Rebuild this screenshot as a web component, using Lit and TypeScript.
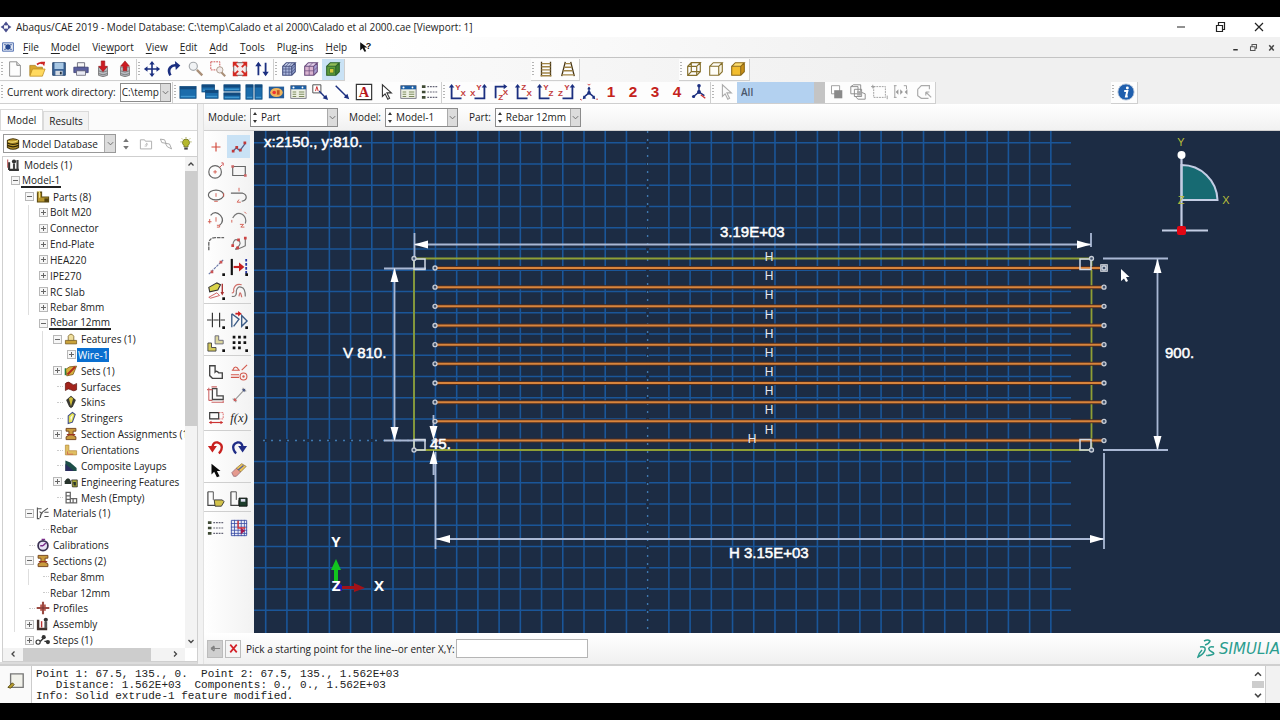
import { LitElement, html, svg, css, nothing, type SVGTemplateResult } from "lit";
import { customElement, property } from "lit/decorators.js";
import { classMap } from "lit/directives/class-map.js";

/* ---------- icon library, every glyph on a 20 x 20 board ---------- */

const NAVY = "#1b2f80";
const axisPair = (path: string, a: string, ax: number, ay: number, b: string, bx: number, by: number, heads: SVGTemplateResult) => svg`
  <path d=${path} fill="none" stroke=${NAVY} stroke-width="2"/>${heads}
  <text x=${ax} y=${ay} class="ax">${a}</text><text x=${bx} y=${by} class="ax">${b}</text>`;
const headUp = (x: number) => svg`<path d="M${x - 3} 5 L${x} 1 L${x + 3} 5Z" fill=${NAVY}/>`;
const numeral = (n: string) => svg`<text x="10" y="16" class="num">${n}</text>`;
const dot = svg`<rect x="17" y="17" width="3" height="3" fill="#111"/>`;
const win = (x: number, y: number, w: number, h: number) => svg`
  <rect x=${x} y=${y} width=${w} height=${h} fill="#1b6cab" stroke="#0e4a7c" stroke-width=".8"/>
  <rect x=${x} y=${y} width=${w} height="3" fill="#124a7e"/>
  <path d="M${x + 1} ${y + h - 2}h${w - 2}" stroke="#3f97cf" stroke-width="1.5"/>`;
const table = svg`
  <rect x="2" y="3" width="17" height="14" fill="#eef0e4" stroke="#556" stroke-width=".8"/>
  <rect x="2" y="3" width="17" height="4" fill="#1d5fa4"/><circle cx="5" cy="5" r="1.2" fill="#fff"/><circle cx="15" cy="5" r="1" fill="#fff"/>
  <path d="M4 10h4M11 10h6M4 12.500h4M11 12.500h6M4 15h4M11 15h6" stroke="#7c8a5c" stroke-width="1.200"/>`;
const cube = (front: string, top: string, side: string, line: string) => svg`
  <path d="M3 7h10v10H3Z" fill=${front}/><path d="M3 7l4-4h10l-4 4Z" fill=${top}/><path d="M13 7l4-4v10l-4 4Z" fill=${side}/>
  <path d="M3 7h10v10H3ZM3 7l4-4h10l-4 4M17 3v10l-4 4" fill="none" stroke=${line} stroke-width="1.200"/>`;
const listing = svg`
  <path d="M7 4h12M7 10h12M7 16h12" stroke="#667" stroke-width="1.200" stroke-dasharray="2 1"/>
  <path d="M1 2.500h4v3H1zM1 8.500h4v3H1zM1 14.500h4v3H1z" fill="#3f4a34"/>`;
const disk = svg`<path d="M1 2v15h9v-5h8" fill="none" stroke="#444" stroke-width="1.300"/><path d="M1 2h6v9" fill="none" stroke="#444"/>`;

const icons: Record<string, SVGTemplateResult> = {
  file: svg`<path d="M4 2h8l4 4v12H4Z" fill="#fdfdfd" stroke="#888"/><path d="M12 2v4h4" fill="#ddd" stroke="#888"/>`,
  open: svg`<path d="M2 6h6l2 2h6v9H2Z" fill="#d9a62c" stroke="#a47a1a" stroke-width=".8"/><path d="M5 10h14l-3 8H2Z" fill="#ffd95e" stroke="#b98a20" stroke-width=".8"/><path d="M10 5q4-3 6-1" stroke="#c22" stroke-width="2" fill="none"/><path d="M14 2l5 0-1 5z" fill="#c22"/>`,
  save: svg`<path d="M3 3h14v14H3Z" fill="#3c6497" stroke="#1e3d68"/><path d="M5 3h10v7H5Z" fill="#a9c8e4"/><path d="M6 12h8v5H6Z" fill="#d5dbe2"/><path d="M11 13h2v3h-2z" fill="#234"/>`,
  print: svg`<path d="M6 3h8v5H6Z" fill="#f5f5f5" stroke="#667"/><path d="M2 8h16v6H2Z" fill="#5a5f9e" stroke="#33386e" stroke-width=".8"/><path d="M5 12h10v5H5Z" fill="#e9eaf4" stroke="#556" stroke-width=".8"/>`,
  dbIn: svg`<path d="M5 8v9q5 3 10 0V8Z" fill="#b9bcc2" stroke="#666" stroke-width=".8"/><path d="M5 12q5 3 10 0M5 15q5 3 10 0" stroke="#777" fill="none"/><path d="M8 1h4v6h3l-5 6-5-6h3Z" fill="#cc1b22" stroke="#8f1015" stroke-width=".6"/>`,
  dbOut: svg`<path d="M5 8v9q5 3 10 0V8Z" fill="#b9bcc2" stroke="#666" stroke-width=".8"/><path d="M5 12q5 3 10 0M5 15q5 3 10 0" stroke="#777" fill="none"/><path d="M8 12h4V7h3l-5-6-5 6h3Z" fill="#cc1b22" stroke="#8f1015" stroke-width=".6"/>`,
  pan: svg`<path d="M10 3v14M3 10h14" stroke=${NAVY} stroke-width="1.800"/><path d="M10 1l3 4H7ZM10 19l3-4H7ZM1 10l4-3v6ZM19 10l-4-3v6Z" fill=${NAVY}/>`,
  rotate: svg`<path d="M6 17C2 10 7 5 13 6" fill="none" stroke=${NAVY} stroke-width="3"/><path d="M11 1l6 5-5 5Z" fill=${NAVY}/>`,
  zoom: svg`<circle cx="7" cy="7" r="4.500" fill="#f1f3f5" stroke="#a5a9ad" stroke-width="1.300"/><path d="M11 11l6 6" stroke="#a98f78" stroke-width="2.600"/>`,
  zoomBox: svg`<path d="M2 2h10v9H2Z" fill="none" stroke="#c44" stroke-dasharray="2 1"/><circle cx="12" cy="11" r="3.500" fill="#f2ecec" stroke="#a98"/><path d="M14 14l4 4" stroke="#a98f78" stroke-width="2.400"/>`,
  fit: svg`<path d="M3 3h14v14H3Z" fill="#f6eaea" stroke="#555"/><path d="M2 2h6L2 8ZM18 2h-6l6 6ZM2 18h6l-6-6ZM18 18h-6l6-6Z" fill="#d42a22"/><path d="M4 4l4 4M16 4l-4 4M4 16l4-4M16 16l-4-4" stroke="#d42a22" stroke-width="2"/>`,
  cycle: svg`<path d="M6 4v13M14 3v13" stroke=${NAVY} stroke-width="2"/><path d="M2.500 7L6 2l3.500 5ZM10.500 13l3.500 5 3.500-5Z" fill=${NAVY}/>`,
  meshA: svg`${cube("#aab6dc", "#c9d1ec", "#8f9dcb", "#46507f")}<path d="M3 10h10l4-4M3 13.500h10l4-4M6.500 7v10M10 7v10M6.500 7l4-4M10 7l4-4" stroke="#46507f" fill="none" stroke-width=".8"/>`,
  meshB: svg`${cube("#d9b3cf", "#e4d0ea", "#a9a0d4", "#6a4c7d")}<path d="M3 12h10l4-4M8 7v10M8 7l4-4" stroke="#6a4c7d" fill="none" stroke-width=".8"/>`,
  meshC: svg`${cube("#5f9e3a", "#8fbb57", "#3e7f2f", "#2d6329")}<path d="M6 9.500h5v5H6Z" fill="#d8c93a" stroke="#37752c"/>`,
  ladder: svg`<path d="M5 2v16M15 2v16" stroke="#4b3a1a" stroke-width="1.500"/><path d="M5 4h10M5 7.500h10M5 11h10M5 14.500h10M4 17.500h12" stroke="#a08445" stroke-width="1.600"/>`,
  persp: svg`<path d="M7 2L3 18M13 2l4 16" stroke="#4b3a1a" stroke-width="1.500"/><path d="M7 4h6M6 8h8M5 12h10M3 16.500h14" stroke="#a08445" stroke-width="1.600"/>`,
  wire: svg`<path d="M3 7h10v10H3ZM3 7l4-4h10l-4 4M17 3v10l-4 4M7 3v10h10M7 13l-4 4" fill="none" stroke="#86702c" stroke-width="1.300"/>`,
  hidden: cube("#fffef8", "#fffef8", "#f6f1de", "#86702c"),
  shaded: cube("#f2bd2f", "#ffdf72", "#c98f17", "#8d6a18"),
  win1: win(1, 4, 18, 13),
  winCascade: svg`${win(1, 2, 14, 8)}${win(5, 8, 14, 9)}`,
  winH: svg`${win(1, 2, 18, 7)}${win(1, 11, 18, 7)}`,
  winV: svg`${win(1, 2, 8, 16)}${win(11, 2, 8, 16)}`,
  palette: svg`<path d="M2 4h17v13H2Z" fill="#245c9a"/><ellipse cx="10.500" cy="10.500" rx="7" ry="5" fill="#f0b45c"/><circle cx="8" cy="10.500" r="2" fill="#e33"/><path d="M11 8h3v5h-3z" fill="#c8551f"/>`,
  table,
  probe: svg`<path d="M2 2h9v9H2Z" fill="#fff" stroke="#444"/><path d="M5 9l1.500-5L8 9" stroke="#c22" fill="none"/><path d="M9 9l7 7" stroke=${NAVY} stroke-width="1.500"/><path d="M19 19l-6-2 4-4Z" fill=${NAVY}/>`,
  arrowLine: svg`<path d="M3 3l12 12" stroke=${NAVY} stroke-width="1.600"/><path d="M18 18l-6-2 4-4Z" fill=${NAVY}/>`,
  textA: svg`<path d="M1.500 1.500h17v17h-17Z" fill="#fff" stroke="#333" stroke-width="1.300"/><text x="10" y="15" class="glyphA">A</text>`,
  pick: svg`<path d="M6 2v13l3-3 3 6 2-1-3-6h5Z" fill="#fff" stroke="#333" stroke-width="1.200"/>`,
  pickDim: svg`<path d="M6 2v13l3-3 3 6 2-1-3-6h5Z" fill="#fafafa" stroke="#aaa" stroke-width="1.200"/>`,
  listing,
  xy: axisPair("M4 4v13h11", "Y", 8, 8, "X", 14, 14, headUp(4)),
  yx: axisPair("M16 4v13H5", "Y", 7, 8, "X", 0, 14, headUp(16)),
  xz: axisPair("M4 17V4h11", "X", 12, 13, "Z", 7, 19, svg`<path d="M13 1l4 3-4 3Z" fill=${NAVY}/>`),
  zx: axisPair("M4 4v13h11", "Z", 8, 8, "X", 14, 14, headUp(4)),
  yz: axisPair("M4 4v13h11", "Y", 8, 8, "Z", 14, 14, headUp(4)),
  zy: axisPair("M16 4v13H5", "Y", 7, 8, "Z", 0, 14, headUp(16)),
  iso: svg`<path d="M10 5v6l-6 5M10 11l6 5" stroke=${NAVY} stroke-width="1.600" fill="none"/><path d="M8 7l2-3 2 3ZM3 18l1-4 3 3ZM17 18l-4-1 3-3Z" fill=${NAVY}/><circle cx="10" cy="11" r="2" fill=${NAVY}/><path d="M8.500 1l1.500 1.500L11.500 1M0 18l2 1M18 18h2" stroke="#c33" fill="none"/>`,
  csys: svg`<path d="M10 3v7l-6 5M10 10l6 4" stroke=${NAVY} stroke-width="1.600" fill="none"/><circle cx="10" cy="3" r="2" fill=${NAVY}/><circle cx="10" cy="10" r="2.200" fill=${NAVY}/><circle cx="4" cy="15" r="1.800" fill=${NAVY}/><path d="M12 13l5 4" stroke="#c33" stroke-width="1.500"/>`,
  n1: numeral("1"), n2: numeral("2"), n3: numeral("3"), n4: numeral("4"),
  selA: svg`<path d="M5 3h9v9H5Z" fill="#fff" stroke="#999"/><path d="M8 8h9v9H8Z" fill="#8a8a8a"/>`,
  selB: svg`<path d="M2 4h8v8H2ZM6 7h8v8H6Z" fill="none" stroke="#888"/><path d="M2 4l3-2h8v8l5 2v6H10l-3-3" fill="none" stroke="#888"/><path d="M9 9h5v5H9z" fill="#aaa"/>`,
  selC: svg`<path d="M3 4h13v12H3Z" fill="none" stroke="#999" stroke-dasharray="2 1"/><path d="M2 2v4M0 4h4M18 14v4" stroke="#999"/>`,
  selD: svg`<path d="M2 3v13M1 3h3M1 16h3M12 3h3v4M12 16h3" stroke="#999" fill="none"/><path d="M3 10l3-3v6ZM8 7l3 3-3 3ZM13 10l3-3v6Z" fill="#999"/>`,
  selE: svg`<path d="M3 7l4-4h9v4M3 7v7l4 3h8M12 10l6 6M12 10h4M12 10v4" stroke="#aaa" fill="none" stroke-width="1.300"/>`,
  info: svg`<circle cx="10" cy="10" r="9" fill="#1f5fae" stroke="#b9c6d8"/><circle cx="11.500" cy="5.500" r="1.600" fill="#fff"/><path d="M8 9h3.500l-1.500 6h2" stroke="#fff" stroke-width="2.200" fill="none"/>`,
  /* toolbox */
  point: svg`<path d="M10 5v10M5 10h10" stroke="#d24a3c" stroke-width="1.300"/>`,
  polyline: svg`<path d="M3 15l4-4 4 3 6-8" stroke="#55608c" stroke-width="1.400" fill="none"/><path d="M2 13h3v3H2zM6 9h3v3H6zM10 12h3v3h-3zM15 4h3v3h-3z" fill="#c03a3a"/>`,
  circle: svg`<circle cx="9" cy="11" r="7" fill="none" stroke="#666" stroke-width="1.300"/><path d="M9 9v4M7 11h4" stroke="#d2584c"/><path d="M14 6l3-3M16 1h2v3" stroke="#c44" fill="none"/>`,
  rect: svg`<path d="M3 5h14v10H3Z" fill="none" stroke="#666" stroke-width="1.300"/><path d="M1.500 3.500h3v3h-3zM15.500 13.500h3v3h-3z" fill="#c66"/>`,
  ellipse: svg`<ellipse cx="10" cy="10" rx="8.500" ry="5.500" fill="none" stroke="#666" stroke-width="1.300"/><path d="M10 8v4M18.500 8v4" stroke="#d2584c"/><path d="M8 17h4" stroke="#d2584c"/>`,
  tangent: svg`<path d="M1 8h13q4 1 4 4.500T13 17" fill="none" stroke="#666" stroke-width="1.300"/><path d="M10 2v4M10 15l-2 3h4" stroke="#d2584c" fill="none"/>`,
  arcC: svg`<path d="M4 6q5-6 11 0 5 6-1 11" fill="none" stroke="#666" stroke-width="1.300"/><path d="M3 10v5M1 13h4M10 8v5M11 17h3v2h-3" stroke="#d2584c" fill="none"/>`,
  arc3: svg`<path d="M3 9q4-8 11-4 5 4 3 10" fill="none" stroke="#777" stroke-width="1.300"/><path d="M2 11v3M16 2l2 2M11 16h4l-3 3h4" stroke="#d2584c" fill="none"/>`,
  fillet: svg`<path d="M2 18v-8q1-6 7-6h10" fill="none" stroke="#666" stroke-width="1.500" stroke-dasharray="4 1"/>`,
  spline: svg`<path d="M3 13q1-9 6-6t-1 8 9-2V5" fill="none" stroke="#777" stroke-width="1.300"/><path d="M1.500 11.500h3v3h-3zM8 5h3v3H8zM7 14h3v3H7zM15.500 3h3v3h-3z" fill="#c44"/>`,
  construct: svg`<path d="M2 18L18 2" stroke="#6a79a8" stroke-width="1.300" stroke-dasharray="3 1"/><path d="M4 14h3v3H4zM14 3h3v3h-3z" fill="#c55"/>${dot}`,
  offset: svg`<path d="M2 1v18" stroke="#111" stroke-width="2.400"/><path d="M4 10h7" stroke="#c51f1f" stroke-width="2.400"/><path d="M10 5l6 5-6 5Z" fill="#c51f1f"/><path d="M18 1v17" stroke="#2433a0" stroke-width="2" stroke-dasharray="3 1.500"/>${dot}`,
  project: svg`<path d="M2 6l9-5 4 2-3 6-9 2Z" fill="#d9d34a" stroke="#333" stroke-width="1.200"/><path d="M2 17l9-5 3 3-10 3Z" fill="none" stroke="#c55"/><path d="M17 2v11" stroke="#a33" stroke-width="1.500"/><path d="M15 11h4l-2 4z" fill="#a33"/>${dot}`,
  offsetCurve: svg`<path d="M2 16q6 1 5-6 1-6 6-4 4 1 4 10" fill="none" stroke="#777" stroke-width="1.300"/><path d="M2 12q3 0 2-4Q6 1 13 3M10 16q1-6 2-3t1 4" fill="none" stroke="#d0706a" stroke-width="1.300"/>`,
  trim: svg`<path d="M0 10h5M7 10h6M15 10h5M6 2v16M14 2v16" stroke="#333" stroke-width="1.300"/>${dot}`,
  mirror: svg`<path d="M2 3v15M2 3l8 6-6 8M13 5l6 6-6 6Z" stroke="#3a5b86" fill="none" stroke-width="1.500"/><path d="M6 3h5" stroke="#c22" stroke-width="2"/><path d="M9 0l4 3-4 3z" fill="#c22"/>${dot}`,
  translate: svg`<path d="M1 10h4v5h5v4H1Z" fill="#d4c95a" stroke="#444"/><path d="M9 2h4v5h5v4H9Z" fill="#ddd7a0" stroke="#667"/>${dot}`,
  pattern: svg`<path d="M3 2h3v3H3zM9 2h3v3H9zM15 2h3v3h-3zM3 8h3v3H3zM9 8h3v3H9zM15 8h3v3h-3zM3 14h3v3H3zM9 14h3v3H9z" fill="#111"/>${dot}`,
  partL: svg`<path d="M3 3h6v7q2-2 4 1h4v6H6l-3-3Z" fill="none" stroke="#444" stroke-width="1.500"/>`,
  constraints: svg`<path d="M2 8h9M3 8q3-7 7 0M13 8l6-6M1 13h9M1 16h9" stroke="#d2584c" fill="none" stroke-width="1.200"/><circle cx="15" cy="15" r="3.800" fill="none" stroke="#d2584c" stroke-width="1.200"/><circle cx="15" cy="15" r="1.300" fill="#d2584c"/>`,
  autoDim: svg`<path d="M6 3h5v8h7v4H6Z" fill="none" stroke="#444" stroke-width="1.400"/><path d="M2 2v14M0 4h6M5 18h13M2 16h4M18 16v3M5 1h6" stroke="#c66" fill="none" stroke-width="1.200"/>`,
  dim: svg`<path d="M5 16L16 4M3 14l4 4M14 2l4 4" stroke="#999" stroke-width="1.200"/><path d="M4 17l4-1-3-3z" fill="#c55"/><path d="M17 3l-4 1 3 3z" fill="#44507c"/>`,
  editDim: svg`<path d="M3 4h10v7H3Z" fill="none" stroke="#333" stroke-width="1.300"/><path d="M13 4h5v7h-5" fill="none" stroke="#d66" stroke-dasharray="2 1"/><path d="M3 15h14" stroke="#c33" stroke-width="1.300"/><path d="M2 15l3-2v4ZM18 15l-3-2v4Z" fill="#c33"/>`,
  fx: svg`<text x="10" y="14" class="fx">f(x)</text>`,
  undo: svg`<path d="M6 10q1-6 6-5 6 2 4 8-1 3-3 4" fill="none" stroke="#c8201e" stroke-width="2.600"/><path d="M1 9h10l-5 7Z" fill="#c8201e"/>`,
  redo: svg`<path d="M14 10q-1-6-6-5-6 2-4 8 1 3 3 4" fill="none" stroke="#1f2c86" stroke-width="2.600"/><path d="M19 9H9l5 7Z" fill="#1f2c86"/>`,
  cursor: svg`<path d="M5 3v12l3-3 3 6 3-1-3-6h4Z" fill="#0a0a0a"/>`,
  eraser: svg`<path d="M2 13l5-5 5 4-5 5H4Z" fill="#e59a8e" stroke="#8a5d6c" stroke-width=".8"/><path d="M7 8l6-5 5 3-6 6Z" fill="#edc45a" stroke="#8c7136" stroke-width=".8"/><path d="M9 10l6-5" stroke="#5560a0" stroke-width="1.500"/>`,
  partOpen: svg`${disk}<path d="M8 11h9l2 2-3 5H9Z" fill="#d2c24a" stroke="#333"/>`,
  partSave: svg`${disk}<path d="M10 9h9v9h-9Z" fill="#1d3d2c" stroke="#111"/><path d="M12 10h5v3h-5z" fill="#dde"/>`,
  grid: svg`<path d="M1.500 1.500h17v17h-17Z" fill="#e9ecf8" stroke="#3c4ea5"/><path d="M5 1v18M9 1v18M12.500 1v18M16 1v18M1 5h18M1 9h18M1 12.500h18M1 16h18" stroke="#3c4ea5" stroke-width=".9"/><path d="M9 2v8h8" stroke="#d33" fill="none" stroke-width="1.500"/><path d="M12 10l5 3-5 4z" fill="#a2174e"/>`,
  /* tree */
  models: svg`<path d="M3 6v11M3 17h14" stroke="#333" stroke-width="3"/><circle cx="10" cy="5" r="3" fill="#333"/><path d="M10 8v8M15 3v13" stroke="#444" stroke-width="3"/><path d="M1 2v12" stroke="#b55" stroke-width="1.500"/>`,
  parts: svg`<path d="M2 3h6v7h10v7H2Z" fill="#b7962f" stroke="#5c4a12" stroke-width="1.500"/><path d="M2 3l3-1v9" stroke="#efe08a" fill="none" stroke-width="1.500"/><path d="M12 12h6v5h-6z" fill="#55430f"/>`,
  features: svg`<path d="M2 12h16v5H2Z" fill="#c9a23c" stroke="#6b5217"/><path d="M6 12V6q4-6 8 0v6Z" fill="#efdf9f" stroke="#6b5217"/>`,
  sets: svg`<path d="M2 8l6-4 10-1-5 12-9 2Z" fill="#d5b13c" stroke="#6d4a12"/><path d="M5 15L16 4" stroke="#b3301e" stroke-width="3"/><path d="M2 6v10" stroke="#2c7d3a" stroke-width="2"/>`,
  surfaces: svg`<path d="M2 5q4-4 8 0t8 0v9q-4 3-8 0t-8 1Z" fill="#a3241c" stroke="#5c120e"/>`,
  skins: svg`<path d="M10 1l7 6-4 9-3 3-3-3-4-9Z" fill="#3b3b34"/><path d="M7 5l3-2 3 2-3 11Z" fill="#d1bf3a"/>`,
  stringers: svg`<path d="M6 7l6-5 4 3-4 11-6 2Z" fill="#e3e04c" stroke="#3e4a8a" stroke-width="1.500"/><path d="M9 9l4-4-3 10z" fill="#f8f8f0"/>`,
  section: svg`<path d="M3 2h14v4h-4v6l4 2v4H3v-4l4-2V6H3Z" fill="#c99b3e" stroke="#6f3f18" stroke-width="1.300"/><path d="M4 11h12" stroke="#9a3520" stroke-width="2"/>`,
  orient: svg`<path d="M2 3h5v8h11v6H2Z" fill="#e0bf62" stroke="#b58b3c"/><path d="M5 12v4h8" stroke="#c55" fill="none"/>`,
  layup: svg`<path d="M2 2l7 3 9 8v4H2Z" fill="#1d4f48"/><path d="M2 7l12 10H2Z" fill="#2b2d60"/>`,
  eng: svg`<path d="M1 9q5-9 9 0v4H1Z" fill="#26332b"/><path d="M11 7h8v10h-7Z" fill="#a8a63a" stroke="#222"/><path d="M13 10h4v5h-3z" fill="#26332b"/>`,
  mesh: svg`<path d="M3 2h6v15H3ZM9 11h9v6H9ZM3 7h6M3 12h6M13 11v6" fill="none" stroke="#666" stroke-width="1.800"/>`,
  materials: svg`<path d="M2 2v16h3M2 4h6M6 17q0-6 4-9l7-5M12 9h6M12 15h6M5 8l4 3" stroke="#555" stroke-width="1.600" fill="none"/>`,
  calib: svg`<circle cx="10" cy="11" r="7" fill="#e8e4f4" stroke="#3a3152" stroke-width="2.500"/><path d="M10 11l4-4M10 11H6M8 2h5" stroke="#7b2e8b" stroke-width="2"/>`,
  profiles: svg`<path d="M10 1v18M1 10h18" stroke="#9a4a42" stroke-width="3"/><path d="M6 5h8v9H6Z" fill="#b85a50"/><path d="M10 5v9M6 10h8" stroke="#5f2a26"/>`,
  assembly: svg`<path d="M3 4v13h13" stroke="#40302c" stroke-width="3.500" fill="none"/><path d="M8 6v9" stroke="#b33" stroke-width="2"/><circle cx="14" cy="4" r="3" fill="#333"/><path d="M14 7v9" stroke="#555" stroke-width="4"/>`,
  steps: svg`<circle cx="3" cy="13" r="3" fill="none" stroke="#333" stroke-width="1.600"/><path d="M6 12l5-5M12 12h5" stroke="#333" stroke-width="2"/><circle cx="11" cy="6" r="3" fill="#333"/><circle cx="17" cy="13" r="3" fill="#333"/>`,
  db: svg`<path d="M2 5q8-5 16 0v10q-8 5-16 0Z" fill="#b9962b" stroke="#4c3a0c" stroke-width="1.500"/><path d="M2 8.500q8 4 16 0M2 12q8 4 16 0" stroke="#2e2408" fill="none" stroke-width="1.800"/><path d="M3 6q7 3 14-1" stroke="#f3dd76" fill="none" stroke-width="1.500"/>`,
  sort: svg`<path d="M6 7L10 2l4 5ZM6 13l4 5 4-5Z" fill="#777"/>`,
  folderUp: svg`<path d="M2 4h6l1 2h9v11H2Z" fill="none" stroke="#aaa" stroke-width="1.300"/><path d="M8 13h3V9M9 11l2-2 2 2" stroke="#aaa" fill="none"/>`,
  links: svg`<path d="M2 3l6 1 2 5-6-1ZM9 9l6 1 3 7-6-3Z" fill="none" stroke="#aaa" stroke-width="1.400"/>`,
  bulb: svg`<path d="M10 3a5 5 0 0 1 3 9v2H7v-2a5 5 0 0 1 3-9Z" fill="#b5b82c" stroke="#5f6216"/><path d="M7.500 15h5v3h-5z" fill="#444"/><path d="M10 0v2M2 7h2M16 7h2M4 2l1.500 1.500M16 2l-1.500 1.500" stroke="#8a8c22"/>`,
  app: svg`<path d="M10 1l4 5-4 3-4-3ZM10 19l4-5-4-3-4 3Z" fill="#4a4f8e"/><path d="M1 10l6-4v8ZM19 10l-6-4v8Z" fill="#4a4f8e"/><circle cx="10" cy="10" r="3" fill="#fff"/>`,
  doc: svg`<path d="M1 3h18v14H1Z" fill="#e7ecf6" stroke="#4464ad" stroke-width="1.500"/><circle cx="10" cy="10" r="4.500" fill="#27488f"/><path d="M4 6h2M14 6h2M4 14h2M14 14h2" stroke="#27488f" stroke-width="2"/>`,
  help: svg`<path d="M2 2v14l4-4 3 6 3-1-3-6h5Z" fill="#111"/><text x="16" y="14" class="q">?</text>`,
  min: svg`<path d="M6 10h8" stroke="#222" stroke-width="1"/>`,
  max: svg`<path d="M6.500 8.500h6v6h-6ZM8.500 8V5.500h6v7H13" fill="none" stroke="#222" stroke-width="1.200"/>`,
  close: svg`<path d="M6 6l8 8M14 6l-8 8" stroke="#222" stroke-width="1.200"/>`,
  mMin: svg`<path d="M7 13h6" stroke="#333" stroke-width="2"/>`,
  mMax: svg`<path d="M6 9h6v5H6ZM8 9V6h6v5h-2" fill="none" stroke="#555" stroke-width="1.400"/>`,
  mClose: svg`<path d="M7 7l6 7M13 7l-6 7" stroke="#444" stroke-width="2"/>`,
  back: svg`<path d="M3 10h14M3 10l5-4M3 10l5 4M8 7v6" stroke="#7f7f7f" stroke-width="1.800" fill="none"/>`,
  cancel: svg`<path d="M5 4l10 12M15 4L5 16" stroke="#d3222a" stroke-width="2.600"/>`,
  message: svg`<path d="M4 2h14v15H4Z" fill="#f1f1ea" stroke="#777" stroke-width="1.500"/><path d="M1 17l5-5 2 2-4 4Z" fill="#b99e2d" stroke="#554710"/>`,
  up: svg`<path d="M5 13l5-5 5 5" fill="none" stroke="#444" stroke-width="2.600"/>`,
  down: svg`<path d="M5 8l5 5 5-5" fill="none" stroke="#444" stroke-width="2.600"/>`,
  left: svg`<path d="M13 5l-5 5 5 5" fill="none" stroke="#444" stroke-width="2.600"/>`,
  right: svg`<path d="M8 5l5 5-5 5" fill="none" stroke="#444" stroke-width="2.600"/>`,
  chev: svg`<path d="M4 7l6 6 6-6" fill="none" stroke="#666" stroke-width="2"/>`,
};

@customElement("cae-icon")
export class CaeIcon extends LitElement {
  @property() name = "";
  static styles = css`
    :host { display: block; width: 20px; height: 20px; flex: none; }
    svg { display: block; width: 100%; height: 100%; overflow: visible; }
    .ax { font: bold 9px "Liberation Sans", sans-serif; fill: #c23a3a; }
    .num { font: bold 17px "Liberation Sans", sans-serif; fill: #c4231c; text-anchor: middle; }
    .glyphA { font: bold 16px "Liberation Serif", serif; fill: #b8161c; text-anchor: middle; }
    .fx { font: italic 14px "Liberation Serif", serif; fill: #222; text-anchor: middle; }
    .q { font: bold 15px "Liberation Sans", sans-serif; fill: #111; text-anchor: middle; }
  `;
  render() {
    return html`<svg viewBox="0 0 20 20" aria-hidden="true">${icons[this.name]}</svg>`;
  }
}

/* ---------- drop-down with optional stepper marks ---------- */

@customElement("cae-combo")
export class CaeCombo extends LitElement {
  @property() label = "";
  @property() value = "";
  @property({ type: Boolean }) stepper = false;
  static styles = css`
    :host { display: flex; align-items: center; gap: 4px; font: 10px/16px "Open Sans", sans-serif; color: #222; }
    .box { display: grid; grid-template-columns: auto 1fr 10px; align-items: center; flex: 1; background: #fff; border: 1px solid #8c8c8c; height: 17px; min-width: 0; }
    select { grid-column: 1 / -1; grid-row: 1; appearance: none; border: 0; background: none; font: inherit; color: inherit; padding: 0 8px 0 1px; margin: 0; width: 100%; height: 17px; outline: none; }
    .steps select { padding-left: 10px; }
    .marks, .drop { grid-row: 1; pointer-events: none; }
    .marks { grid-column: 1; width: 9px; height: 15px; }
    .drop { grid-column: 3; display: grid; place-items: center; width: 10px; height: 17px; background: #dcdcdc; border-left: 1px solid #aaa; box-sizing: border-box; }
    .drop cae-icon { width: 9px; height: 9px; }
    label { white-space: nowrap; }
  `;
  render() {
    return html`
      ${this.label ? html`<label for="s">${this.label}</label>` : nothing}
      <div class=${classMap({ box: true, steps: this.stepper })}>
        <select id="s" aria-label=${this.label || this.value}><option>${this.value}</option></select>
        ${this.stepper ? html`<svg class="marks" viewBox="0 0 9 15"><path d="M2 5l2-3 2 3ZM2 10l2 3 2-3Z" fill="#333"/></svg>` : nothing}
        <span class="drop"><cae-icon name="chev"></cae-icon></span>
      </div>`;
  }
}

/* ---------- model tree ---------- */

type Node = [depth: number, text: string, icon?: string, toggle?: "" | "+" | "-", mark?: "current" | "selected"];
const tree: Node[] = [
  [0, "Models (1)", "models"],
  [1, "Model-1", "", "-", "current"],
  [2, "Parts (8)", "parts", "-"],
  [3, "Bolt M20", "", "+"], [3, "Connector", "", "+"], [3, "End-Plate", "", "+"], [3, "HEA220", "", "+"],
  [3, "IPE270", "", "+"], [3, "RC Slab", "", "+"], [3, "Rebar 8mm", "", "+"],
  [3, "Rebar 12mm", "", "-", "current"],
  [4, "Features (1)", "features", "-"],
  [5, "Wire-1", "", "+", "selected"],
  [4, "Sets (1)", "sets", "+"], [4, "Surfaces", "surfaces"], [4, "Skins", "skins"], [4, "Stringers", "stringers"],
  [4, "Section Assignments (1)", "section", "+"], [4, "Orientations", "orient"], [4, "Composite Layups", "layup"],
  [4, "Engineering Features", "eng", "+"], [4, "Mesh (Empty)", "mesh"],
  [2, "Materials (1)", "materials", "-"], [3, "Rebar"],
  [2, "Calibrations", "calib"],
  [2, "Sections (2)", "section", "-"], [3, "Rebar 8mm"], [3, "Rebar 12mm"],
  [2, "Profiles", "profiles"], [2, "Assembly", "assembly", "+"], [2, "Steps (1)", "steps", "+"],
];

@customElement("cae-tree")
export class CaeTree extends LitElement {
  static styles = css`
    :host { display: flex; flex-direction: column; min-height: 0; font: 10px/14px "Open Sans", sans-serif; color: #222; }
    .view { flex: 1; display: flex; min-height: 0; overflow: hidden; }
    ul { flex: 1; min-width: 0; overflow: hidden; margin: 0; padding: 0; list-style: none; display: grid; grid-auto-rows: 1fr; }
    li { display: flex; align-items: center; white-space: nowrap; min-height: 0; }
    .lead { flex: none; align-self: stretch; display: flex; }
    .lead:empty { width: 3px; }
    .pad { width: 6px; }
    .guide { width: 14px; box-sizing: border-box; }
    .guide.on::before { content: ""; display: block; height: 100%; margin-left: 5px; border-left: 1px solid #dedede; }
    .slot { width: 12px; flex: none; display: grid; place-items: center; align-self: stretch; }
    .stub { width: 6px; margin-left: 6px; border-top: 1px dotted #ccc; }
    .toggle { width: 9px; height: 9px; padding: 0; border: 1px solid #b8b8b8; background: #f6f6f6; display: grid; place-items: center; }
    .toggle svg { width: 7px; height: 7px; display: block; }
    cae-icon { width: 14px; height: 14px; margin: 0 2px 0 1px; }
    .text { padding: 0 1px; }
    .current { border-bottom: 2px solid #222; line-height: 12px; }
    .selected { background: #0a6fd0; color: #fff; }
    .bar { flex: none; background: #f3f3f3; display: flex; }
    .bar.v { width: 12px; flex-direction: column; }
    .bar.h { height: 13px; margin-right: 12px; }
    .bar cae-icon { width: 10px; height: 12px; margin: 1px; }
    .bar.h cae-icon { margin: 0 5px; }
    .track { flex: 1; display: flex; flex-direction: inherit; }
    .thumb { background: #cdcdcd; }
    .v .thumb { flex: 0 0 55%; }
    .h .thumb { flex: 0 0 90%; }
  `;
  render() {
    return html`
      <div class="view">
        <ul role="tree">${tree.map(([depth, text, icon, toggle, mark], i) => html`
          <li role="treeitem">
            <span class="lead">${depth ? html`<span class="pad"></span>${Array.from({ length: depth - 1 }, (_, g) =>
              html`<span class=${classMap({ guide: true, on: this.hasGuide(i, g + 2) })}></span>`)}` : nothing}</span>
            ${depth ? html`<span class="slot">${toggle
              ? html`<button class="toggle" aria-label="Toggle ${text}"><svg viewBox="0 0 7 7"><path d=${toggle === "+" ? "M1 3.500h5M3.500 1v5" : "M1 3.500h5"} stroke="#666"/></svg></button>`
              : html`<span class="stub"></span>`}</span>` : nothing}
            ${icon ? html`<cae-icon name=${icon}></cae-icon>` : nothing}
            <span class=${classMap({ text: true, current: mark === "current", selected: mark === "selected" })}>${text}</span>
          </li>`)}
        </ul>
        <div class="bar v"><cae-icon name="up"></cae-icon><div class="track"><div class="thumb"></div></div><cae-icon name="down"></cae-icon></div>
      </div>
      <div class="bar h"><cae-icon name="left"></cae-icon><div class="track"><div class="thumb"></div></div><cae-icon name="right"></cae-icon></div>`;
  }
  /* a guide shows where a later sibling at that level still follows */
  hasGuide(i: number, level: number) {
    for (let k = i + 1; k < tree.length; k++) {
      if (tree[k][0] === level) return true;
      if (tree[k][0] < level) return false;
    }
    return false;
  }
}

/* ---------- sketch viewport ---------- */

const STEP = 21.22;
const cols = Array.from({ length: 38 }, (_, i) => 265.7 + i * STEP);
const rows = Array.from({ length: 23 }, (_, i) => 142.7 + i * 21.25);
const bars = Array.from({ length: 10 }, (_, i) => 268 + i * 19.17);
const head = (x: number, y: number, dir: "l" | "r" | "u" | "d") => {
  const d = { l: "l14-4v8z", r: "l-14-4v8z", u: "l-4 14h8z", d: "l-4-14h8z" }[dir];
  return svg`<path d="M${x} ${y}${d}" class="head"/>`;
};

@customElement("cae-viewport")
export class CaeViewport extends LitElement {
  static styles = css`
    :host { display: block; background: #1c2c44; overflow: hidden; }
    svg { display: block; width: 100%; height: 100%; }
    .grid { stroke: #1a5699; stroke-width: 1.6; }
    .axis { stroke: #3f78ae; stroke-width: 1.4; stroke-dasharray: 2 6; }
    .axis.back { stroke: #1c2c44; stroke-width: 3; stroke-dasharray: none; }
    .bar { stroke: #d8843c; stroke-width: 2; }
    .barEdge { stroke: #4a2c22; stroke-width: 4; }
    .frame { fill: none; stroke: #8f9f35; stroke-width: 1.8; }
    .dim { stroke: #a9b8d4; stroke-width: 1.8; fill: none; }
    .head { fill: #fff; }
    .sq { fill: none; stroke: #d0d8e4; stroke-width: 1.5; }
    .node { fill: #43546e; stroke: #c8ced8; stroke-width: 1.3; }
    text { font-family: "Liberation Sans", sans-serif; fill: #fff; }
    .val { font-size: 15px; stroke: #fff; stroke-width: .5; }
    .h { font-size: 12px; text-anchor: middle; fill: #e4e9f0; }
    .tri { font: bold 15px "Open Sans", sans-serif; text-anchor: middle; }
    .cmp { font-size: 11px; fill: #b9bf3a; text-anchor: middle; }
  `;
  render() {
    return html`<svg viewBox="254 131 1026 501" preserveAspectRatio="xMinYMin meet" role="img" aria-label="Sketch">
      ${cols.map((x) => svg`<path class="grid" d="M${x} 131V640"/>`)}
      ${rows.map((y) => svg`<path class="grid" d="M254 ${y}H1071"/>`)}
      <path class="axis back" d="M647.600 131V640M254 440.500H435"/>
      <path class="axis" d="M647.600 131V640"/><path class="axis" d="M263 440.500H435"/>
      <path class="frame" d="M414 258.500H1091.500V450H414Z"/>
      ${bars.map((y) => svg`<path class="barEdge" d="M436 ${y}H1103"/><path class="bar" d="M435 ${y}H1104"/>`)}
      <path class="dim" d="M414 244.500H1091M414.500 233V258M1091 233V247M394.500 268V440M384 268.500H426M384 440.500H426
        M1157.500 259V450M1103 258.500H1168M1103 450H1168M436 539H1104M435.500 452V549M1104 453V549M433.500 415V435M433.500 455V475"/>
      ${head(414, 244.5, "l")}${head(1091, 244.5, "r")}${head(394.5, 268, "u")}${head(394.5, 441, "d")}
      ${head(1157.5, 259, "u")}${head(1157.5, 450, "d")}${head(436, 539, "l")}${head(1104, 539, "r")}
      ${head(433.5, 440, "d")}${head(433.5, 450, "u")}
      <path class="sq" d="M414 259h11v10.500h-11ZM1080 259h11v10.500h-11ZM414 439.500h11v10.500h-11ZM1080 439.500h11v10.500h-11Z"/>
      ${bars.map((y) => svg`<circle class="node" cx="435" cy=${y} r="2"/><circle class="node" cx="1104" cy=${y} r="2"/>`)}
      ${[[414, 258.5], [1091.5, 258.5], [414, 450], [1091.5, 450]].map(([x, y]) => svg`<circle class="node" cx=${x} cy=${y} r="2"/>`)}
      <path d="M1100.500 264.500h7v7h-7Z" fill="#8d98a8" stroke="#b7bcc4"/><circle class="node" cx="1104" cy="268" r="2"/>
      ${bars.map((y) => svg`<text class="h" x="769" y=${y - 7}>H</text>`)}
      <text class="h" x="752" y="443">H</text>
      <text class="val" x="264" y="147">x:2150., y:810.</text>
      <text class="val" x="720" y="237">3.19E+03</text>
      <text class="val" x="343" y="358">V 810.</text>
      <text class="val" x="1165" y="358">900.</text>
      <text class="val" x="430" y="449">45.</text>
      <text class="val" x="729" y="558">H 3.15E+03</text>
      <path d="M334 582v-12h-3l5-11 5 11h-3v12Z" fill="#12c41e"/>
      <path d="M342 586h12v-3l11 5-11 4v-3H342Z" fill="#a31218"/>
      <path d="M337 582l5 3v6h-5z" fill="#1a1fae"/>
      <text class="tri" x="336" y="547">Y</text><text class="tri" x="336" y="591">Z</text><text class="tri" x="379" y="591">X</text>
      <path d="M1181.500 165A36 36 0 0 1 1217.500 200H1181.500Z" fill="#176a72" stroke="#c3cde4" stroke-width="2"/>
      <path d="M1181.500 155V230M1162 230.500H1208" stroke="#c3cde4" stroke-width="2.200"/>
      <circle cx="1181.500" cy="155" r="4" fill="#fff"/><rect x="1177" y="226" width="9" height="9" rx="2" fill="#e30613"/>
      <text class="cmp" x="1181" y="146">Y</text><text class="cmp" x="1226" y="204">X</text><text class="cmp" x="1181" y="204">Z</text>
      <path d="M1121 269v12l3-2.500 2 3.500 2-1-2-4h3.500Z" fill="#fff"/>
    </svg>`;
  }
}

/* ---------- application window ---------- */

const bar1 = {
  left: [["file", "open", "save", "print", "dbIn", "dbOut"], ["pan", "rotate", "zoom", "zoomBox", "fit", "cycle"], ["meshA", "meshB", "meshC"]],
  mid: ["ladder", "persp"],
  right: ["wire", "hidden", "shaded"],
};
const bar2 = [
  ["win1", "winCascade", "winH", "winV", "palette", "table", "probe", "arrowLine", "textA", "pick", "table", "listing"],
  ["xy", "yx", "xz", "zx", "yz", "zy", "iso", "n1", "n2", "n3", "n4", "csys"],
];
const toolbox = [
  ["point", "polyline", "circle", "rect", "ellipse", "tangent", "arcC", "arc3", "fillet", "spline", "construct", "offset", "project", "offsetCurve"],
  ["trim", "mirror", "translate", "pattern"],
  ["partL", "constraints", "autoDim", "dim", "editDim", "fx"],
  ["undo", "redo", "cursor", "eraser"],
  ["partOpen", "partSave"],
  ["listing", "grid"],
];
const menus: [string, string, string][] = [
  ["", "F", "ile"], ["", "M", "odel"], ["Vie", "w", "port"], ["", "V", "iew"], ["", "E", "dit"],
  ["", "A", "dd"], ["", "T", "ools"], ["Plu", "g", "-ins"], ["", "H", "elp"],
];

@customElement("app-root")
export class AppRoot extends LitElement {
  static styles = css`
    :host { display: flex; flex-direction: column; box-sizing: border-box; height: 100vh; padding: 17px 0; background: #000; color: #222; font: 10px/16px "Open Sans", sans-serif; overflow: hidden; }
    button { font: inherit; color: inherit; background: none; border: 0; padding: 0; margin: 0; display: grid; place-items: center; }
    .title { display: flex; align-items: center; height: 20px; background: #fff; padding-right: 11px; }
    .title h1 { flex: 1; margin: 0 0 0 4px; font: 10px/20px "Open Sans", sans-serif; white-space: nowrap; overflow: hidden; }
    .title > cae-icon { width: 12px; height: 12px; }
    .wins { display: flex; gap: 19px; }
    .menu { display: flex; align-items: center; height: 20px; background: linear-gradient(90deg, #fff 30%, #f1f1f1 70%); border-bottom: 1px solid #c4c4c4; padding: 0 0 0 2px; }
    .menu nav { flex: 1; display: flex; align-items: center; gap: 12px; margin-left: 9px; }
    .menu > cae-icon { width: 12px; height: 12px; }
    .menu nav cae-icon { width: 12px; height: 12px; }
    .menu u { text-underline-offset: 2px; }
    .menu .mdi { width: 18px; }
    .mdi cae-icon { width: 15px; height: 15px; }
    .bar { display: flex; align-items: center; height: 23px; background: linear-gradient(90deg, #fafafa 30%, #f0f0f0 70%); }
    .group { display: flex; align-items: center; height: 22px; background: #fdfdfd; border-right: 1px solid #cfcfcf; border-bottom: 1px solid #cfcfcf; box-sizing: border-box; }
    .group::before { content: ""; width: 2px; height: 15px; margin: 0 1px; background: repeating-linear-gradient(#b5b5b5 0 1px, transparent 1px 3px); }
    .tool { width: 22px; height: 21px; }
    .tool cae-icon, .cell cae-icon { width: 18px; height: 18px; }
    .on { background: #c9e2f5; }
    .gapA { flex: 0 0 186px; }
    .gapB { flex: 0 0 99px; }
    .gapC { flex: 0 0 175px; }
    .cwd { width: 164px; margin: 0 1px 0 3px; }
    .filter { width: 88px; height: 21px; background: #b3d1f0; display: grid; grid-template-columns: 1fr 11px; }
    .filter select { grid-area: 1 / 1 / 2 / 3; appearance: none; border: 0; background: none; font: inherit; font-weight: 600; color: #49566a; padding: 0 0 0 4px; }
    .filter i { grid-area: 1 / 2; background: #c4c4c4; pointer-events: none; }
    .main { flex: 1; display: flex; min-height: 0; background: #f2f2f2; }
    .side { width: 198px; flex: none; display: flex; flex-direction: column; background: #fff; box-sizing: border-box; border-right: 1px solid #d0d0d0; border-bottom: 2px solid #dcdcdc; padding-top: 5px; }
    .tabs { display: flex; align-items: flex-end; height: 21px; background: #fbfbfb; }
    .tab { height: 21px; padding: 0 6px; border: 1px solid #dadada; border-bottom: 0; background: #fff; }
    .tab.off { height: 19px; padding: 0 5px; background: #f3f3f3; }
    .pick { display: flex; align-items: center; height: 25px; padding: 0 0 0 3px; border-top: 1px solid #d8d8d8; }
    .pick .source { flex: 0 0 113px; display: flex; align-items: center; border: 1px solid #999; box-sizing: border-box; height: 19px; }
    .source cae-icon { width: 14px; height: 14px; margin-left: 2px; }
    .source select { appearance: none; border: 0; background: none; font: inherit; color: inherit; padding: 0 0 0 2px; flex: 1; min-width: 0; height: 17px; }
    .source span { width: 10px; height: 17px; background: #dcdcdc; border-left: 1px solid #aaa; display: grid; place-items: center; }
    .source span cae-icon { width: 9px; height: 9px; margin: 0; }
    .pick button { width: 20px; height: 20px; }
    .pick button cae-icon { width: 14px; height: 14px; }
    .side cae-tree { flex: 1; border: 1px solid #cfcfcf; border-right: 0; margin-left: 2px; }
    .work { flex: 1; min-width: 0; display: flex; flex-direction: column; margin-left: 5px; border-left: 1px solid #e2e2e2; background: #f7f7f7; }
    .context { display: flex; align-items: center; gap: 11px; height: 26px; padding-left: 4px; background: linear-gradient(#fff, #f1f1f1); }
    .c1 { width: 130px; } .c2 { width: 109px; } .c3 { width: 112px; }
    .stage { flex: 1; min-height: 0; display: flex; border-top: 1px solid #d0d0d0; box-sizing: border-box; }
    .box { width: 50px; flex: none; background: linear-gradient(90deg, #fff, #f2f2f2); box-sizing: border-box; padding: 0 3px 0 0; }
    .set { display: grid; grid-template-columns: 23px 23px; grid-auto-rows: 23px; padding: 4px 0 1px; border-bottom: 1px solid #cfcfcf; }
    .set:first-child { row-gap: 1px; }
    .set:last-child { border: 0; }
    .cell { width: 23px; height: 23px; }
    .stage cae-viewport { flex: 1; min-width: 0; }
    .prompt { display: flex; align-items: center; height: 31px; background: linear-gradient(#fff, #f0f0f0); padding-left: 3px; }
    .prompt button { width: 16px; height: 18px; border: 1px solid #bcbcbc; background: #f5f5f5; margin-right: 2px; box-sizing: border-box; }
    .prompt button.dim { background: #cfcfcf; }
    .prompt button cae-icon { width: 13px; height: 13px; }
    .prompt label { margin: 0 1px 0 3px; white-space: nowrap; }
    .prompt input { width: 132px; height: 19px; box-sizing: border-box; border: 1px solid #b5b5b5; background: #fff; padding: 0 3px; font: inherit; outline: none; }
    .brand { margin-left: auto; display: flex; align-items: center; color: #2a9d8f; font: italic 15px/20px "DejaVu Sans", sans-serif; }
    .brand svg { width: 19px; height: 20px; margin-right: 3px; }
    .log { display: flex; height: 39px; border-top: 2px solid #cfcfcf; box-sizing: border-box; background: #f2f2f2; }
    .log > button { width: 32px; background: #fafafa; border-right: 1px solid #ccc; box-sizing: border-box; align-content: start; padding-top: 6px; }
    .log > button cae-icon { width: 18px; height: 18px; }
    .log pre { flex: 1; margin: 0; padding: 3px 0 0 4px; background: #fff; color: #222; font: 11px/11px "Liberation Mono", monospace; overflow: hidden; }
    .sb { width: 14px; display: flex; flex-direction: column; align-items: center; justify-content: space-between; background: #fff; border-right: 1px solid #ccc; margin-right: 14px; padding: 2px 0; }
    .sb cae-icon { width: 12px; height: 12px; }
    .sb span { width: 12px; height: 7px; background: #cdcdcd; }
  `;

  private tools(names: string[], active = "") {
    return names.map((n) => html`<button class=${classMap({ tool: true, on: n === active })} aria-label=${n}><cae-icon name=${n}></cae-icon></button>`);
  }

  render() {
    return html`
      <header class="title">
        <cae-icon name="app"></cae-icon>
        <h1>Abaqus/CAE 2019 - Model Database: C:\\temp\\Calado et al 2000\\Calado et al 2000.cae [Viewport: 1]</h1>
        <div class="wins">${["min", "max", "close"].map((n) => html`<button aria-label=${n}><cae-icon name=${n}></cae-icon></button>`)}</div>
      </header>
      <div class="menu">
        <cae-icon name="doc"></cae-icon>
        <nav>${menus.map(([a, k, b]) => html`<button>${html`<span>${a}<u>${k}</u>${b}</span>`}</button>`)}
          <button aria-label="Context help"><cae-icon name="help"></cae-icon></button></nav>
        ${["mMin", "mMax", "mClose"].map((n) => html`<button class="mdi" aria-label=${n}><cae-icon name=${n}></cae-icon></button>`)}
      </div>
      <div class="bar">
        ${bar1.left.map((g) => html`<div class="group">${this.tools(g, "meshC")}</div>`)}
        <span class="gapA"></span>
        <div class="group">${this.tools(bar1.mid)}</div>
        <span class="gapB"></span>
        <div class="group">${this.tools(bar1.right)}</div>
      </div>
      <div class="bar">
        <div class="group"><cae-combo class="cwd" label="Current work directory:" value="C:\\temp"></cae-combo></div>
        ${bar2.map((g) => html`<div class="group">${this.tools(g)}</div>`)}
        <div class="group">${this.tools(["pickDim"])}
          <div class="filter"><select aria-label="Selection filter"><option>All</option></select><i></i></div>
          ${this.tools(["selA", "selB", "selC", "selD", "selE"])}</div>
        <span class="gapC"></span>
        <div class="group">${this.tools(["info"])}</div>
      </div>
      <div class="main">
        <aside class="side">
          <div class="tabs"><button class="tab">Model</button><button class="tab off">Results</button></div>
          <div class="pick">
            <div class="source"><cae-icon name="db"></cae-icon><select aria-label="Tree source"><option>Model Database</option></select><span><cae-icon name="chev"></cae-icon></span></div>
            ${["sort", "folderUp", "links", "bulb"].map((n) => html`<button aria-label=${n}><cae-icon name=${n}></cae-icon></button>`)}
          </div>
          <cae-tree></cae-tree>
        </aside>
        <section class="work">
          <div class="context">
            <cae-combo class="c1" stepper label="Module:" value="Part"></cae-combo>
            <cae-combo class="c2" stepper label="Model:" value="Model-1"></cae-combo>
            <cae-combo class="c3" stepper label="Part:" value="Rebar 12mm"></cae-combo>
          </div>
          <div class="stage">
            <div class="box">${toolbox.map((set) => html`<div class="set">${set.map((n) => html`
              <button class=${classMap({ cell: true, on: n === "polyline" })} aria-label=${n}><cae-icon name=${n}></cae-icon></button>`)}</div>`)}</div>
            <cae-viewport></cae-viewport>
          </div>
          <div class="prompt">
            <button class="dim" aria-label="Previous step"><cae-icon name="back"></cae-icon></button>
            <button aria-label="Cancel"><cae-icon name="cancel"></cae-icon></button>
            <label for="pt">Pick a starting point for the line--or enter X,Y:</label>
            <input id="pt" type="text">
            <div class="brand"><svg viewBox="0 0 19 20" fill="none" stroke="#2a9d8f" stroke-width="1.500"><path d="M7 2q4-2 6 0-1 3-5 4M3 8q6-1 5 3t-7 7q1-4 4-7M17 8q-4-1-5 1t3 4-1 3-4 0"/></svg>SIMULIA</div>
          </div>
        </section>
      </div>
      <footer class="log">
        <button aria-label="Message area"><cae-icon name="message"></cae-icon></button>
        <pre>${"Point 1: 67.5, 135., 0.  Point 2: 67.5, 135., 1.562E+03\n   Distance: 1.562E+03  Components: 0., 0., 1.562E+03\nInfo: Solid extrude-1 feature modified."}</pre>
        <div class="sb"><cae-icon name="up"></cae-icon><span></span><cae-icon name="down"></cae-icon></div>
      </footer>`;
  }
}
